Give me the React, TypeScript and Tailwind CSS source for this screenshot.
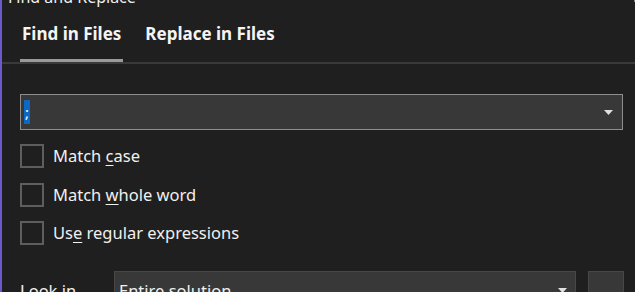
import { useState } from "react";

const font = { fontFamily: '"Noto Sans", "Open Sans", sans-serif' };

function Check({ label }: { label: React.ReactNode }) {
  return (
    <label className="flex items-center gap-[9px] h-[24px] shrink-0">
      <span className="w-[24px] h-[24px] border-2 border-[#5e5e5e] bg-[#1f1f1f] shrink-0" />
      <span className="text-[16.5px] text-[#f0f0f0] leading-[24px]">{label}</span>
    </label>
  );
}

export default function App() {
  const [tab, setTab] = useState(0);
  return (
    <div
      className="w-[635px] h-[292px] overflow-hidden bg-[#1f1f1f] flex text-white"
      style={font}
    >
      <div className="w-[2px] bg-[#6a5acd] shrink-0" />
      <div className="flex-1 flex flex-col relative">
        <div className="absolute right-0 top-[-8px] w-[8px] h-[10px] border border-[#8a8a8a]" />
        <div className="h-[8px] shrink-0 overflow-hidden relative">
          <div className="absolute left-[6px] top-[-13px] text-[16px] leading-[20px] text-[#f0f0f0] whitespace-nowrap">
            Find and Replace
          </div>
        </div>
        <div className="flex shrink-0 gap-[20px] pl-[18px] pt-[12px] border-b-2 border-[#3a3a3a] h-[56px]">
          {["Find in Files", "Replace in Files"].map((t, i) => (
            <button
              key={t}
              onClick={() => setTab(i)}
              className="relative h-full text-[17px] font-bold leading-[28px] px-[2px] text-[#f4f4f4] flex items-start"
            >
              <span className="block">{t}</span>
              {tab === i && (
                <span className="absolute left-0 right-0 bottom-0 h-[3px] bg-[#9a9a9a]" />
              )}
            </button>
          ))}
        </div>
        <div className="px-[18px] pt-[30px] shrink-0">
          <div className="h-[36px] w-[603px] border border-[#8d8d8d] bg-[#383838] flex items-center pl-[3px] pr-[9px]">
            <span className="bg-[#0b68c4] text-white text-[15px] leading-[24px] px-[1px] w-[6px] flex justify-center">
              ;
            </span>
            <div className="flex-1" />
            <svg width="9" height="5" viewBox="0 0 9 5">
              <path d="M0 0 H9 L4.5 5 Z" fill="#e0e0e0" />
            </svg>
          </div>
          <div className="flex flex-col gap-[14.5px] mt-[14px]">
            <Check
              label={
                <>
                  Match <u className="underline-offset-[3px]">c</u>ase
                </>
              }
            />
            <Check
              label={
                <>
                  Match <u className="underline-offset-[3px]">w</u>hole word
                </>
              }
            />
            <Check
              label={
                <>
                  Us<u className="underline-offset-[3px]">e</u> regular expressions
                </>
              }
            />
          </div>
          <div className="flex items-start mt-[26px]">
            <span className="w-[94px] text-[16.5px] leading-[24px] pt-[8px] text-[#f0f0f0]">
              Look in
            </span>
            <div className="w-[462px] h-[36px] border border-[#474747] bg-[#383838] flex items-start pl-[4px] pr-[8px] pt-[7px]">
              <span className="text-[16.5px] leading-[24px] text-[#f0f0f0]">
                Entire solution
              </span>
              <div className="flex-1" />
              <svg className="mt-[9px]" width="9" height="5" viewBox="0 0 9 5">
                <path d="M0 0 H9 L4.5 5 Z" fill="#e0e0e0" />
              </svg>
            </div>
            <div className="ml-[12px] w-[36px] h-[36px] border border-[#474747] bg-[#383838]" />
          </div>
        </div>
      </div>
    </div>
  );
}
